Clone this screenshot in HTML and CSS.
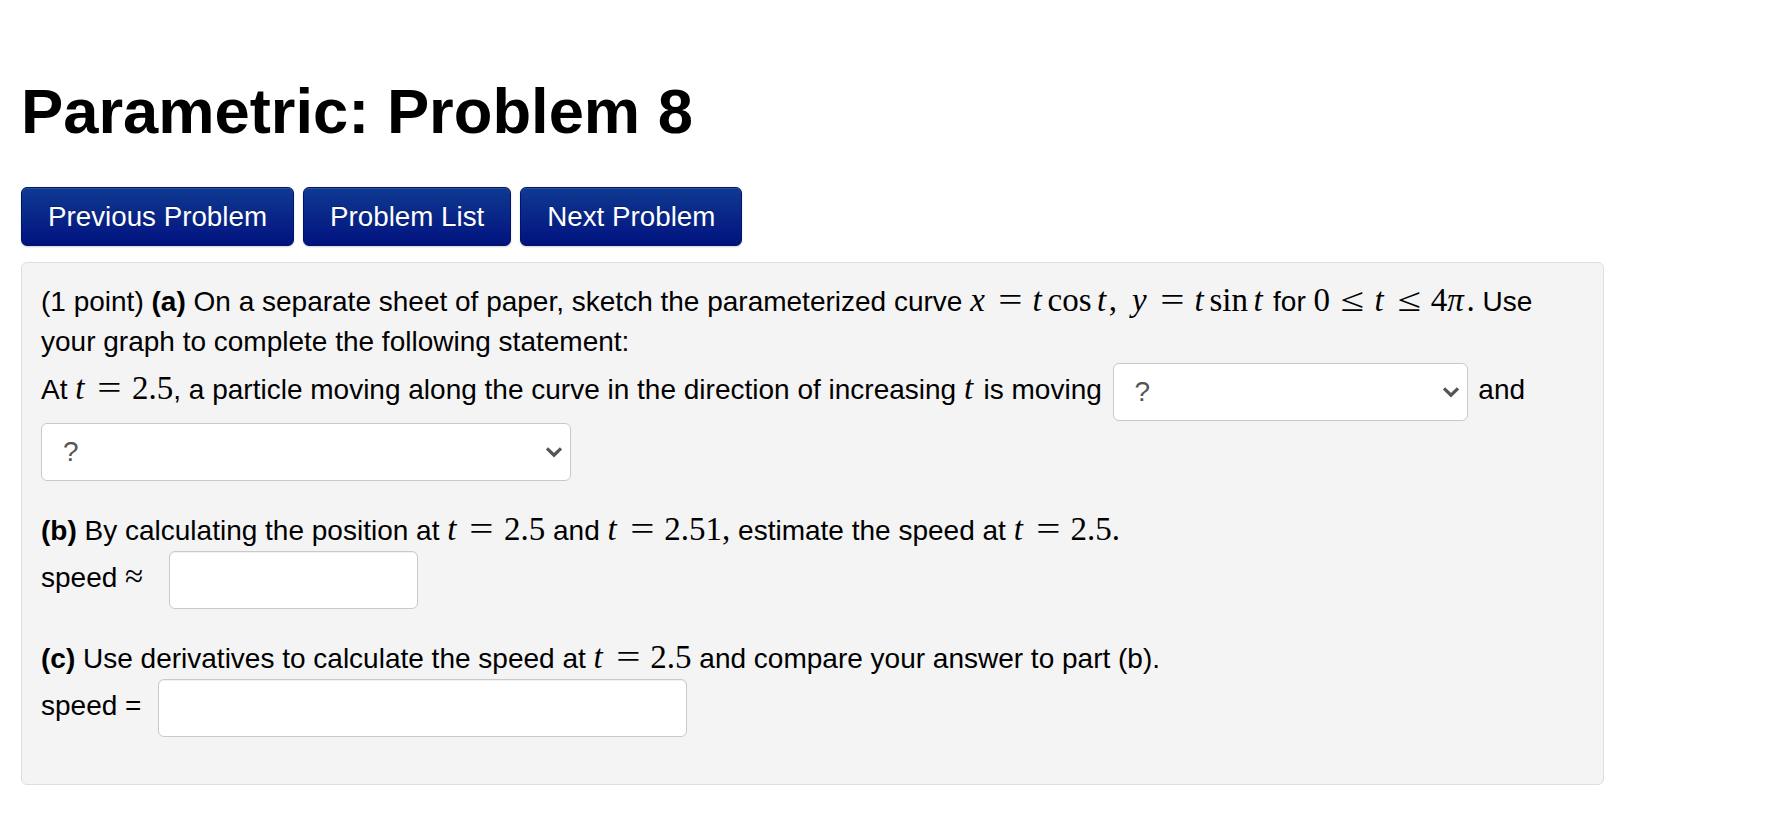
FILE: index.html
```html
<!DOCTYPE html>
<html lang="en">
<head>
<meta charset="utf-8">
<title>Parametric: Problem 8</title>
<link rel="stylesheet" href="styles.css">
</head>
<body>
<div class="page">
  <h1 class="title">Parametric: Problem 8</h1>
  <div class="nav">
    <a class="btn" href="#">Previous Problem</a>
    <a class="btn" href="#">Problem List</a>
    <a class="btn" href="#">Next Problem</a>
  </div>
  <div class="problem">
    <div class="line nowrap">(1 point) <b>(a)</b> On a separate sheet of paper, sketch the parameterized curve <span class="math"><i>x</i><span class="rel">=</span><i>t</i><span class="op">cos</span><i>t</i>,<span class="quad"></span><i>y</i><span class="rel">=</span><i>t</i><span class="op">sin</span><i>t</i></span> for <span class="math">0<span class="rel">≤</span><i>t</i><span class="rel">≤</span>4<i>π</i>.</span> Use</div>
    <div class="line">your graph to complete the following statement:</div>
    <div class="line sel-line nowrap">At <span class="math"><i>t</i><span class="rel">=</span>2.5</span>, a particle moving along the curve in the direction of increasing <span class="math"><i>t</i></span> is moving <span class="select s1"><span class="q">?</span><svg class="chev" width="18" height="12" viewBox="0 0 18 12"><path d="M2 2.4 L9 9.2 L16 2.4" fill="none" stroke="#555" stroke-width="3.2"/></svg></span> and</div>
    <div class="sel-row"><span class="select s2"><span class="q">?</span><svg class="chev" width="18" height="12" viewBox="0 0 18 12"><path d="M2 2.4 L9 9.2 L16 2.4" fill="none" stroke="#555" stroke-width="3.2"/></svg></span></div>
    <div class="line part-b nowrap"><b>(b)</b> By calculating the position at <span class="math"><i>t</i><span class="rel">=</span>2.5</span> and <span class="math"><i>t</i><span class="rel">=</span>2.51,</span> estimate the speed at <span class="math"><i>t</i><span class="rel">=</span>2.5.</span></div>
    <div class="ans-row row-b"><span class="ans-label">speed <span class="math">≈</span></span><span class="input in-b"></span></div>
    <div class="line part-c nowrap"><b>(c)</b> Use derivatives to calculate the speed at <span class="math"><i>t</i><span class="rel">=</span>2.5</span> and compare your answer to part (b).</div>
    <div class="ans-row row-c"><span class="ans-label">speed =</span><span class="input in-c"></span></div>
  </div>
</div>
</body>
</html>
```

FILE: styles.css
```css
html, body {
  margin: 0;
  padding: 0;
  background: #ffffff;
}

body {
  font-family: "Liberation Sans", Arial, Helvetica, sans-serif;
  color: #000;
}

.page {
  padding: 0 0 0 21px;
}

.title {
  margin: 75px 0 0 0;
  font-size: 63.3px;
  line-height: 72px;
  font-weight: bold;
  color: #000;
}

.nav {
  display: flex;
  gap: 9px;
  margin-top: 40px;
}

.btn {
  display: inline-flex;
  align-items: center;
  box-sizing: border-box;
  height: 59px;
  padding: 0 26px 0 26px;
  border: 1px solid #001468;
  border-radius: 6px;
  background: linear-gradient(to bottom, #0e3a92 0%, #0a2a8a 40%, #01127f 100%);
  box-shadow: 0 1px 2px rgba(0, 0, 0, 0.18), inset 0 1px 0 rgba(255, 255, 255, 0.12);
  color: #fff;
  font-size: 27.75px;
  text-decoration: none;
  text-shadow: 0 -1px 0 rgba(0, 0, 0, 0.25);
  white-space: nowrap;
}

.problem {
  box-sizing: border-box;
  width: 1583px;
  margin-top: 16px;
  padding: 19px 19px 47px 19px;
  background: #f4f4f4;
  border: 1px solid #dedede;
  border-radius: 6px;
  font-size: 28px;
  line-height: 40px;
}

.line {
  font-size: 28px;
  line-height: 40px;
}

.nowrap {
  white-space: nowrap;
}

.math {
  font-family: "Liberation Serif", "Times New Roman", serif;
  font-size: 33px;
  line-height: 1;
}

.math i {
  font-style: italic;
  margin-right: 0.08em;
}

.rel {
  display: inline-block;
  margin: 0 0.4em;
  transform: scaleX(1.3);
}

.op {
  margin: 0 0.167em 0 0.1em;
}

.quad {
  display: inline-block;
  width: 15px;
}

.sel-line {
  margin-top: 1px;
}

.select {
  display: inline-flex;
  align-items: center;
  justify-content: space-between;
  box-sizing: border-box;
  height: 58px;
  padding: 0 7px 0 21px;
  background: #fff;
  border: 1px solid #c9c9c9;
  border-radius: 6px;
  vertical-align: middle;
  color: #555;
  font-family: "Liberation Sans", Arial, sans-serif;
  font-size: 28px;
  line-height: 1;
  margin: 0 3px;
}

.select .q {
  color: #555;
}

.chev {
  display: block;
}

.s1 {
  width: 355px;
}

.sel-row {
  display: flex;
  margin-top: 2px;
}

.s2 {
  width: 530px;
  margin: 0;
}

.part-b {
  margin-top: 30px;
}

.part-c {
  margin-top: 30px;
}

.ans-row {
  display: flex;
  align-items: center;
}

.row-b {
  margin-top: 0;
}

.row-c {
  margin-top: 0;
}

.ans-label {
  font-size: 28px;
  line-height: 40px;
  padding-bottom: 4px;
  white-space: nowrap;
}

.input {
  display: block;
  box-sizing: border-box;
  height: 58px;
  background: #fff;
  border: 1px solid #cacaca;
  border-radius: 6px;
  box-shadow: inset 0 1px 1px rgba(0, 0, 0, 0.06);
}

.in-b {
  width: 249px;
  margin-left: 26px;
}

.in-c {
  width: 529px;
  margin-left: 17px;
}
```
